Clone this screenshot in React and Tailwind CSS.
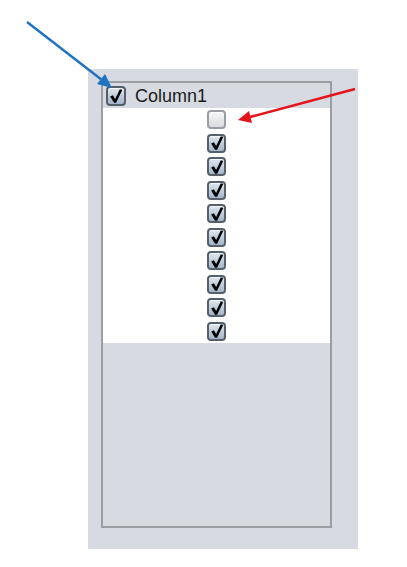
import React from 'react';

const rows = [false, true, true, true, true, true, true, true, true, true];

function CheckBox({ checked, size = 19 }) {
  return (
    <div
      className={`flex items-center justify-center rounded-[4px] border-2 shadow-[inset_0_1px_0_rgba(255,255,255,0.7)] ${
        checked
          ? 'border-[#56606b] bg-gradient-to-b from-[#dfe7ef] to-[#a3b6cb]'
          : 'border-[#9a9da3] bg-gradient-to-b from-[#f8f8f8] to-[#d8dadd]'
      }`}
      style={{ width: size, height: size }}
    >
      {checked && (
        <svg width="14" height="14" viewBox="0 0 15 15">
          <path
            d="M1.2 8 L4.2 6.8 L6.6 10.8 L11.6 0.4 L14.2 1.2 L7.6 14.6 L5.4 14.6 Z"
            fill="#000"
          />
        </svg>
      )}
    </div>
  );
}

export default function App() {
  return (
    <div className="relative w-[407px] h-[567px] bg-white font-['Liberation_Sans',Arial,sans-serif]">
      <div className="absolute left-[88px] top-[69px] w-[270px] h-[480px] bg-[#d7dae1] pl-[13px] pt-[12px]">
        <div className="flex flex-col w-[231px] h-[447px] border-2 border-[#9b9da2]">
          {/* header row */}
          <div className="flex items-center h-[25px] gap-[9px] pl-[3px]">
            <CheckBox checked size={20} />
            <span className="text-[18px] leading-none text-[#1a1a1a]">Column1</span>
          </div>
          {/* cell rows */}
          <div className="flex flex-col bg-white">
            {rows.map((c, i) => (
              <div key={i} className="flex items-center justify-center h-[23.5px]">
                <CheckBox checked={c} />
              </div>
            ))}
          </div>
        </div>
      </div>

      {/* callout arrows */}
      <svg className="absolute left-0 top-0" width="407" height="567">
        <line x1="27" y1="22" x2="102" y2="80" stroke="#1f74c2" strokeWidth="2.5" />
        <polygon points="112,88 97,84 105,74" fill="#1f74c2" />
        <line x1="355" y1="89" x2="250" y2="117" stroke="#e5141b" strokeWidth="2.5" />
        <polygon points="238,120 249,111 252,123" fill="#e5141b" />
      </svg>
    </div>
  );
}
